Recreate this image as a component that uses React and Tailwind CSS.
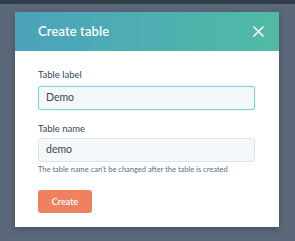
export default function App() {
  return (
    <div
      className="w-[295px] h-[241px] overflow-hidden bg-[#5b6879] border-t-[4px] border-[#323d4c] pt-[8px] pl-[15px]"
      style={{ fontFamily: "Lato, 'Noto Sans', sans-serif" }}
    >
      <div className="w-[264px] bg-white shadow-[0_2px_6px_rgba(0,0,0,0.25)]">
        <div className="h-[39px] flex items-center justify-between pl-[23px] pr-[15px] bg-gradient-to-r from-[#4ba2bd] to-[#52baa4]">
          <span className="text-white text-[13px] font-semibold tracking-[0.1px]">Create table</span>
          <svg width="11" height="11" viewBox="0 0 11 11" fill="none" stroke="white" strokeWidth="1.6" strokeLinecap="round">
            <path d="M1 1 L10 10 M10 1 L1 10" />
          </svg>
        </div>
        <div className="pl-[23px] pr-[23px] pt-[18px] pb-[14px]">
          <div className="text-[9.5px] text-[#33475b] leading-[12px]">Table label</div>
          <div className="mt-[5px] h-[24px] w-[217px] rounded-[3px] border border-[#7fd1de] bg-[#f5f8fa] shadow-[0_0_2px_#b9e6ee] flex items-center pl-[7px] text-[10.5px] text-[#33475b]">
            Demo
          </div>
          <div className="mt-[13px] text-[9.5px] text-[#33475b] leading-[12px]">Table name</div>
          <div className="mt-[3px] h-[24px] w-[217px] rounded-[3px] border border-[#dfe3eb] bg-[#f5f8fa] flex items-center pl-[7px] text-[10.5px] text-[#33475b]">
            demo
          </div>
          <div className="mt-[2px] text-[7.5px] text-[#516f90] leading-[11px]">
            The table name can't be changed after the table is created
          </div>
          <button className="mt-[15px] h-[23px] w-[54px] rounded-[3px] bg-[#ef8161] text-white text-[9px] font-semibold">
            Create
          </button>
        </div>
      </div>
    </div>
  );
}
